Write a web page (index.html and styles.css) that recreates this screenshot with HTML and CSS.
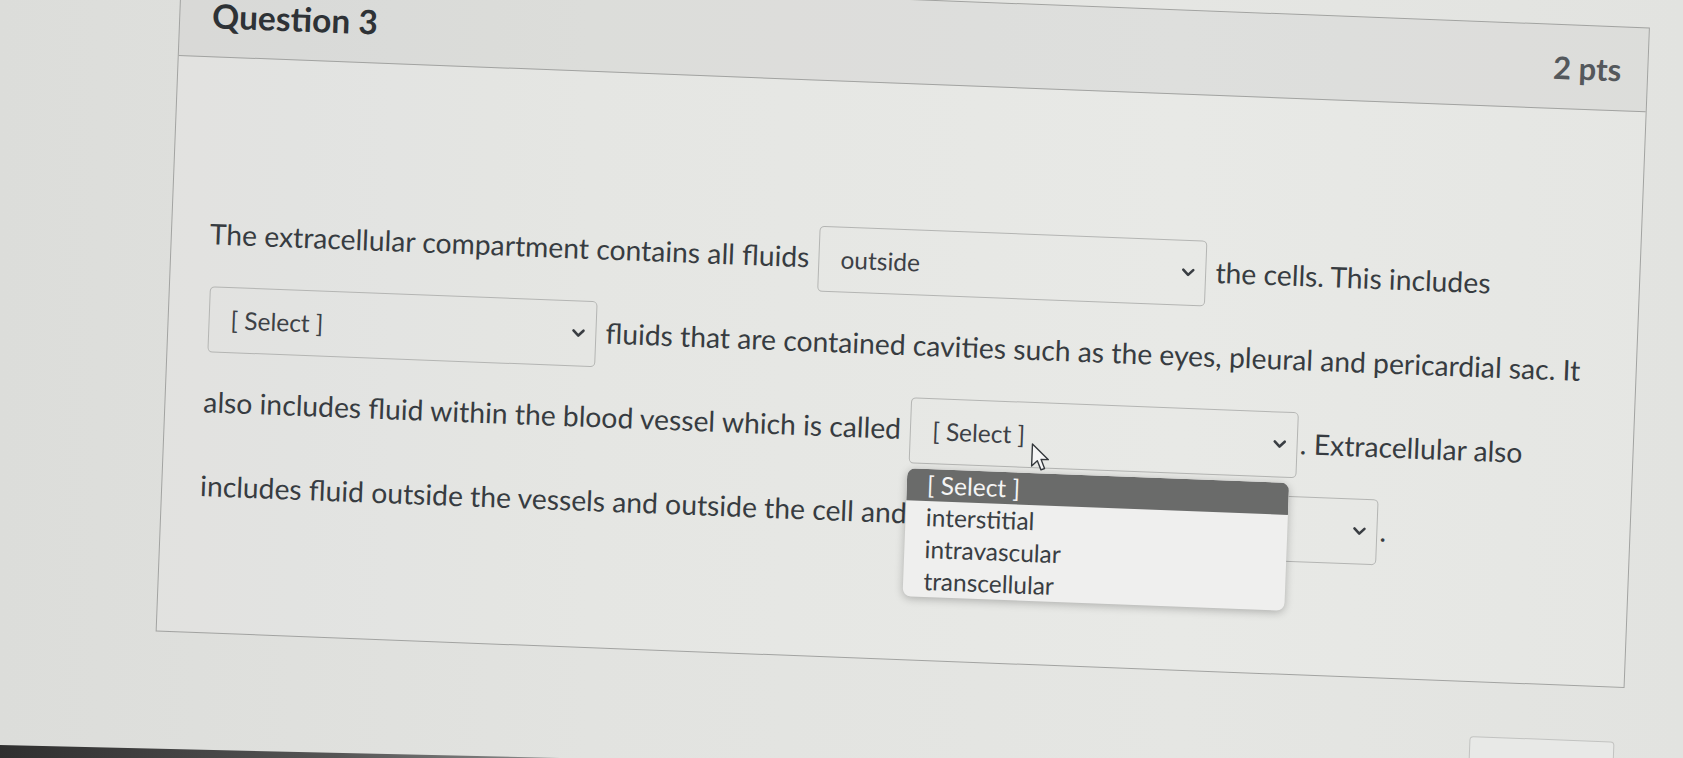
FILE: index.html
```html
<!DOCTYPE html>
<html lang="en">
<head>
    <meta charset="UTF-8">
    <meta name="viewport" content="width=device-width, initial-scale=1.0">
    <title>Quiz - Question 3</title>
    <link rel="stylesheet" href="styles.css">
</head>
<body>
    <div class="quiz-screen">
        <div class="question">
            <div class="question-header">
                <span class="question-name">Question 3</span>
                <span class="question-points">2 pts</span>
            </div>

            <div class="question-text">
                The extracellular compartment contains all fluids
                <span class="dropdown">
                    <span class="dropdown-value">outside</span>
                    <svg class="dropdown-arrow" viewBox="0 0 14 9"><path d="M2 2 L7 7 L12 2"/></svg>
                </span>
                the cells. This includes
                <span class="dropdown">
                    <span class="dropdown-value">[ Select ]</span>
                    <svg class="dropdown-arrow" viewBox="0 0 14 9"><path d="M2 2 L7 7 L12 2"/></svg>
                </span>
                fluids that are contained cavities such as the eyes, pleural and pericardial sac. It also includes fluid within the blood vessel which is called
                <span class="dropdown is-open">
                    <span class="dropdown-value">[ Select ]</span>
                    <svg class="dropdown-arrow" viewBox="0 0 14 9"><path d="M2 2 L7 7 L12 2"/></svg>
                    <!-- open option list -->
                    <span class="dropdown-menu">
                        <span class="option is-selected">[ Select ]</span>
                        <span class="option">interstitial</span>
                        <span class="option">intravascular</span>
                        <span class="option">transcellular</span>
                    </span>
                    <svg class="pointer" viewBox="0 0 20 30"><path d="M2 2 L2 24 L7.5 18.5 L11.5 27.5 L15 26 L11.2 17 L18.5 17 Z"/></svg>
                </span>. Extracellular also includes fluid outside the vessels and outside the cell and
                <span class="dropdown dropdown-wide">
                    <span class="dropdown-value">[ Select ]</span>
                    <svg class="dropdown-arrow" viewBox="0 0 14 9"><path d="M2 2 L7 7 L12 2"/></svg>
                </span>.
            </div>
        </div>

        <div class="quiz-footer">
            <button class="btn-next">Next</button>
        </div>
    </div>

    <div class="bezel"></div>
</body>
</html>
```

FILE: styles.css
```css
* {
    margin: 0;
    padding: 0;
    box-sizing: border-box;
}

html,
body {
    height: 100%;
}

body {
    font-family: Lato, "Open Sans", sans-serif;
    background: linear-gradient(90deg, #dcddda 0%, #e2e3e0 35%, #e5e6e3 70%, #e2e3e0 100%);
    color: #373c41;
    overflow: hidden;
    display: flex;
    flex-direction: column;
}

/* whole quiz area, tilted a little */
.quiz-screen {
    flex: 1;
    min-height: 0;
    width: 1470px;
    margin: -29px 0 0 181px;
    transform: rotate(2.2deg);
    transform-origin: 0 0;
}

.question {
    border: 1px solid #a2a3a1;
    background-color: rgba(255, 255, 255, 0.12);
}

.question-header {
    height: 84px;
    display: flex;
    justify-content: space-between;
    align-items: center;
    padding: 0 26px 0 32px;
    background-color: rgba(0, 0, 0, 0.04);
    border-bottom: 1px solid #a2a3a1;
    font-weight: bold;
}

.question-name {
    font-size: 33.5px;
    color: #2e3236;
}

.question-points {
    font-size: 31px;
    color: #54585c;
}

.question-text {
    padding: 134px 36px 105px 38px;
    font-size: 28.3px;
    line-height: 84px;
}

/* inline answer selects */
.dropdown {
    position: relative;
    display: inline-flex;
    align-items: center;
    width: 388px;
    height: 66px;
    margin: 0 2px;
    padding: 0 10px 0 21px;
    border: 1px solid #b4b5b3;
    border-radius: 5px;
    font-size: 24.5px;
    line-height: normal;
    color: #3d4146;
    vertical-align: baseline;
}

.dropdown-wide {
    width: 462px;
}

.dropdown-value {
    flex: 1;
}

.dropdown-arrow {
    width: 14px;
    height: 9px;
    fill: none;
    stroke: #3a3e43;
    stroke-width: 2.6;
    stroke-linecap: round;
    stroke-linejoin: round;
}

.dropdown-menu {
    position: absolute;
    top: calc(100% + 6px);
    left: -2px;
    width: 382px;
    display: flex;
    flex-direction: column;
    background-color: #efefee;
    border-radius: 8px;
    box-shadow: 0 2px 8px rgba(0, 0, 0, 0.25);
    overflow: hidden;
    z-index: 2;
}

.option {
    height: 32px;
    line-height: 32px;
    padding-left: 20px;
    color: #3a3e43;
}

.option.is-selected {
    background-color: #6a6b6a;
    color: #f4f4f4;
}

.pointer {
    position: absolute;
    left: 120px;
    top: 39px;
    width: 20px;
    height: 30px;
    fill: #f6f6f6;
    stroke: #34383c;
    stroke-width: 1.4;
    stroke-linejoin: round;
    z-index: 3;
}

.quiz-footer {
    display: flex;
    justify-content: flex-end;
    padding: 54px 8px 0 0;
}

.btn-next {
    width: 145px;
    height: 90px;
    border: 1px solid #c2c3c1;
    border-radius: 4px;
    background-color: #e8e9e7;
    font-family: inherit;
    font-size: 24px;
    color: #3d4146;
}

/* dark monitor edge in the lower left corner */
.bezel {
    flex: none;
    width: 560px;
    height: 13px;
    background: linear-gradient(90deg, #2f2f2f, #555555 60%, #8a8a8a);
    clip-path: polygon(0 0, 100% 100%, 0 100%);
}
```
